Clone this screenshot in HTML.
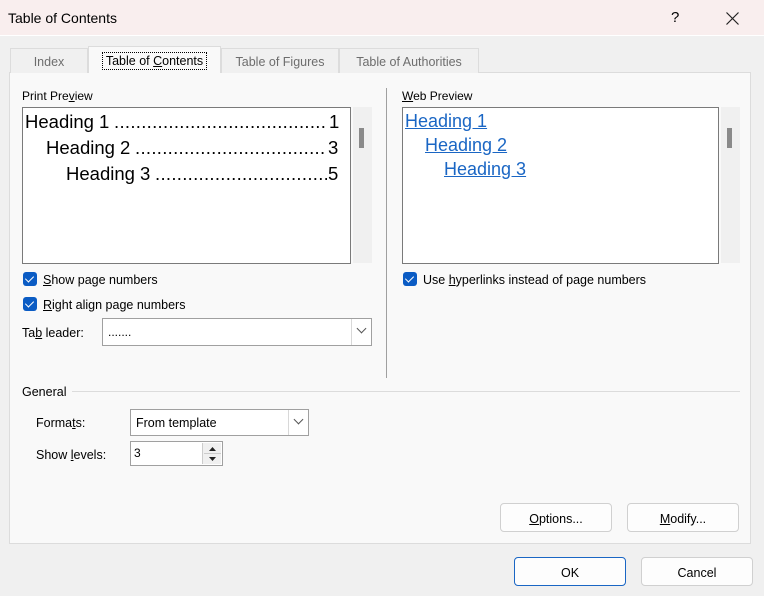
<!DOCTYPE html>
<html><head><style>
*{margin:0;padding:0;box-sizing:border-box}
body{width:764px;height:596px;background:#f0f0f0;font-family:"Liberation Sans",sans-serif;font-size:12px;color:#000;position:relative;overflow:hidden}
.a{position:absolute}
.title{left:0;top:0;width:764px;height:36px;background:#f9eeee;border-bottom:1px solid #fff}
.tab{top:48px;height:25px;border:1px solid #dcdcdc;border-bottom:none;background:#f0f0f0;color:#6d6d6d;font-size:12.5px;text-align:center;line-height:27px}
.panel{left:9px;top:72px;width:742px;height:472px;background:#f9f9f9;border:1px solid #dcdcdc}
.box{background:#fff;border:1px solid #7a7a7a}
.sb{background:#f0f0f0}
.thumb{background:#8a8a8a;width:5px;height:20px}
.pv{font-size:18.5px;white-space:nowrap}
.lk{color:#1a66c4;text-decoration:underline;font-size:18px}
.cb{width:14px;height:14px;background:#0b5cc4;border-radius:3px}
.cb::after{content:"";position:absolute;left:4px;top:2px;width:4px;height:7px;border:solid #fff;border-width:0 1.3px 1.3px 0;transform:rotate(45deg)}
.u{text-decoration:underline}
.combo{background:#fff;border:1px solid #a0a0a0}
.dd{position:absolute;right:0;top:0;bottom:0;width:20px;border-left:1px solid #d8d8d8}
.dd::after{content:"";position:absolute;left:6px;top:6px;width:6px;height:6px;border:solid #555;border-width:0 1px 1px 0;transform:rotate(45deg)}
.btn{background:#fdfdfd;border:1px solid #d0d0d0;border-radius:4px;text-align:center;font-size:12.5px;line-height:30px}
</style></head><body>
<div class="a title"></div>
<div class="a" style="left:8px;top:10px;font-size:14px">Table of Contents</div>
<div class="a" style="left:671px;top:9px;font-size:15px">?</div>
<svg class="a" style="left:726px;top:12px" width="13" height="13"><path d="M0.5 0.5L12.5 12.5M12.5 0.5L0.5 12.5" stroke="#222" stroke-width="1.2"/></svg>
<div class="a panel"></div>
<div class="a tab" style="left:10px;width:78px">Index</div>
<div class="a tab" style="left:88px;width:133px;top:46px;height:27px;background:#f9f9f9;color:#000;line-height:29px"><span style="border:1px dotted #000;padding:1px 3px">Table of <span class="u">C</span>ontents</span></div>
<div class="a tab" style="left:221px;width:118px">Table of Figures</div>
<div class="a tab" style="left:339px;width:140px">Table of Authorities</div>

<div class="a" style="left:22px;top:89px">Print Pre<span class="u">v</span>iew</div>
<div class="a box" style="left:22px;top:107px;width:329px;height:157px"></div>
<div class="a sb" style="left:353px;top:107px;width:19px;height:156px"></div>
<div class="a thumb" style="left:359px;top:128px"></div>
<div class="a pv" style="left:25px;top:111px">Heading 1</div>
<div class="a pv" style="left:114px;top:111px;width:213px;overflow:hidden;letter-spacing:0.3px">....................................................</div>
<div class="a pv" style="left:329px;top:111px">1</div>
<div class="a pv" style="left:46px;top:137px">Heading 2</div>
<div class="a pv" style="left:135px;top:137px;width:192px;overflow:hidden;letter-spacing:0.3px">....................................................</div>
<div class="a pv" style="left:328px;top:137px">3</div>
<div class="a pv" style="left:66px;top:163px">Heading 3</div>
<div class="a pv" style="left:155px;top:163px;width:172px;overflow:hidden;letter-spacing:0.3px">....................................................</div>
<div class="a pv" style="left:328px;top:163px">5</div>

<div class="a cb" style="left:23px;top:272px"></div>
<div class="a" style="left:43px;top:273px;font-size:12.5px"><span class="u">S</span>how page numbers</div>
<div class="a cb" style="left:23px;top:297px"></div>
<div class="a" style="left:43px;top:298px;font-size:12.5px"><span class="u">R</span>ight align page numbers</div>
<div class="a" style="left:22px;top:326px;font-size:12.5px">Ta<span class="u">b</span> leader:</div>
<div class="a combo" style="left:102px;top:318px;width:270px;height:28px"><span style="position:absolute;left:5px;top:6px">.......</span><div class="dd"></div></div>

<div class="a" style="left:386px;top:88px;width:1px;height:290px;background:#a0a0a0"></div>

<div class="a" style="left:402px;top:89px"><span class="u">W</span>eb Preview</div>
<div class="a box" style="left:402px;top:107px;width:317px;height:157px"></div>
<div class="a sb" style="left:721px;top:107px;width:19px;height:156px"></div>
<div class="a thumb" style="left:727px;top:128px"></div>
<div class="a lk" style="left:405px;top:111px">Heading 1</div>
<div class="a lk" style="left:425px;top:135px">Heading 2</div>
<div class="a lk" style="left:444px;top:159px">Heading 3</div>
<div class="a cb" style="left:403px;top:272px"></div>
<div class="a" style="left:423px;top:273px;font-size:12.5px">Use <span class="u">h</span>yperlinks instead of page numbers</div>

<div class="a" style="left:22px;top:385px;font-size:12.5px">General</div>
<div class="a" style="left:72px;top:391px;width:668px;height:1px;background:#dcdcdc"></div>
<div class="a" style="left:36px;top:416px;font-size:12.5px">Forma<span class="u">t</span>s:</div>
<div class="a combo" style="left:130px;top:409px;width:179px;height:27px"><span style="position:absolute;left:5px;top:6px;font-size:12.5px">From template</span><div class="dd"></div></div>
<div class="a" style="left:36px;top:448px;font-size:12.5px">Show <span class="u">l</span>evels:</div>
<div class="a combo" style="left:130px;top:441px;width:93px;height:25px"><span style="position:absolute;left:3px;top:4px">3</span>
<div style="position:absolute;right:1px;top:1px;width:19px;height:21px;background:#f0f0f0;border-left:1px solid #ccc">
<svg width="19" height="21"><path d="M6 8L9.5 4L13 8Z M6 14L9.5 18L13 14Z" fill="#222"/><path d="M1 10.5H18" stroke="#ccc"/></svg></div></div>

<div class="a btn" style="left:500px;top:503px;width:112px;height:29px"><span class="u">O</span>ptions...</div>
<div class="a btn" style="left:627px;top:503px;width:112px;height:29px"><span class="u">M</span>odify...</div>
<div class="a btn" style="left:514px;top:557px;width:112px;height:29px;border:1px solid #1a66c4">OK</div>
<div class="a btn" style="left:641px;top:557px;width:112px;height:29px">Cancel</div>
</body></html>
